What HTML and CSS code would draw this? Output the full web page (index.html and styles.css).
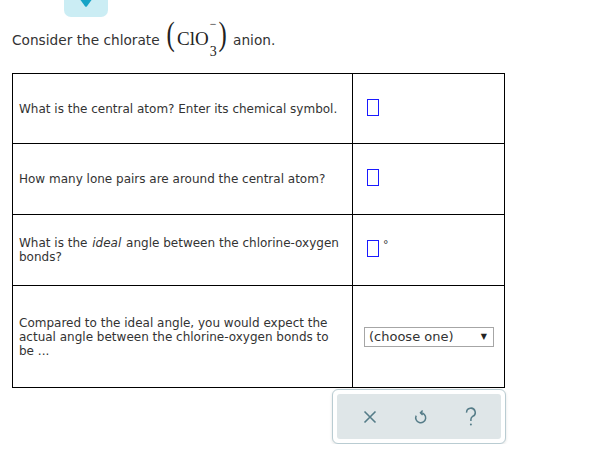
FILE: index.html
```html
<!DOCTYPE html>
<html>
<head>
<meta charset="utf-8">
<link rel="stylesheet" href="styles.css">
</head>
<body>
<div class="page">
  <div class="top-btn">
    <svg class="top-mark" width="14" height="8" viewBox="0 0 14 8"><path d="M0 -2 L14 -2 L8 6.2 Q7 7.4 6 6.2 Z" fill="#17a4c6"/></svg>
  </div>
  <p class="prompt">Consider the chlorate <span class="math"><span class="paren">(</span><span class="chem">ClO</span><span class="subsup"><span class="sup">−</span><span class="sub">3</span></span><span class="paren">)</span></span> anion.</p>

  <div class="grid">
    <div class="q"><span>What is the central atom? Enter its chemical symbol.</span></div>
    <div class="a"><span class="box"></span></div>
    <div class="q"><span>How many lone pairs are around the central atom?</span></div>
    <div class="a"><span class="box"></span></div>
    <div class="q"><span>What is the <i class="em">ideal</i> angle between the chlorine-oxygen bonds?</span></div>
    <div class="a"><span class="box"></span><span class="deg">°</span></div>
    <div class="q"><span>Compared to the ideal angle, you would expect the actual angle between the chlorine-oxygen bonds to be ...</span></div>
    <div class="a sel-cell"><div class="select"><span>(choose one)</span><span class="arrow">▼</span></div></div>
  </div>

  <div class="toolbar-row">
    <div class="toolbar">
      <div class="tools">
        <svg width="14" height="14" viewBox="0 0 14 14"><path d="M1.5 1.5 L12.5 12.5 M12.5 1.5 L1.5 12.5" stroke="#557c88" stroke-width="1.6" fill="none"/></svg>
        <svg width="14" height="17" viewBox="0 0 14 17"><path d="M6.5 4.8 A5 5 0 1 1 2.2 7.6" stroke="#557c88" stroke-width="1.5" fill="none"/><path d="M8.6 2.6 L6.5 4.8 L8.6 7" stroke="#557c88" stroke-width="1.5" fill="none"/></svg>
        <svg width="12" height="20" viewBox="0 0 12 20"><path d="M1.6 5.6 A4.3 4.3 0 1 1 7.6 9.4 C6.4 10.2 5.9 11 5.9 12.6 L5.9 14" stroke="#557c88" stroke-width="1.5" fill="none"/><circle cx="5.9" cy="17.4" r="1" fill="#557c88"/></svg>
      </div>
    </div>
  </div>
</div>
</body>
</html>
```

FILE: styles.css
```css
* { box-sizing: border-box; }
html, body { margin: 0; padding: 0; background: #fff; }
body { font-family: "DejaVu Sans", Verdana, sans-serif; color: #333; }
.page { padding-left: 12px; width: 591px; }

.top-btn {
  margin-left: 52px;
  width: 44px;
  height: 17px;
  background: #cbedf4;
  border-radius: 0 0 7px 7px;
  display: flex;
  justify-content: center;
  align-items: flex-start;
}
.top-mark { display: block; }

.prompt {
  margin: 0;
  height: 56px;
  padding-top: 0;
  font-size: 13.7px;
  line-height: 34px;
  display: flex;
  align-items: baseline;
  white-space: pre;
}
.math { font-family: "Liberation Serif", "Times New Roman", serif; color: #222; display: inline-flex; align-items: baseline; margin: 0 1px; }
.paren { font-size: 33px; font-weight: normal; line-height: 34px; display: inline-block; transform: scaleX(0.75); }
.chem { font-size: 19px; margin-left: 1px; }
.subsup {
  display: inline-flex;
  flex-direction: column;
  align-items: center;
  font-size: 14px;
  line-height: 13px;
  margin-left: 1px;
  position: relative;
  top: -17px;
}
.sup { font-size: 12px; }
.sub { margin-top: 14px; }

.grid {
  display: grid;
  grid-template-columns: 340px 152px;
  grid-template-rows: 70px 71px 71px 102px;
  width: 493px;
  border-left: 1px solid #000;
  border-top: 1px solid #000;
}
.grid > div {
  border-right: 1px solid #000;
  border-bottom: 1px solid #000;
  display: flex;
  align-items: center;
}
.q {
  font-size: 12px;
  line-height: 14px;
  padding: 0 6px;
  color: #333;
}
.em { padding: 0 1px; }
.a { padding-left: 14px; }
.box {
  display: inline-block;
  width: 12px;
  height: 17px;
  border: 1px solid #1a1aff;
  margin-top: -3px;
}
.deg { font-size: 11px; margin-left: 4px; margin-top: -12px; color: #333; }
.sel-cell { padding-left: 11px; }
.select {
  width: 130px;
  height: 20px;
  border: 1px solid #a6a6a6;
  display: flex;
  align-items: center;
  justify-content: space-between;
  padding: 0 6px 0 4px;
  font-size: 13px;
  color: #333;
}
.arrow { font-size: 8px; color: #222; }

.toolbar-row { display: flex; padding-left: 320px; padding-top: 1px; }
.toolbar {
  width: 174px;
  height: 55px;
  border: 1px solid #b9ccd2;
  border-radius: 6px;
  padding: 4px;
  background: #fff;
  box-shadow: 0 1px 3px rgba(0,0,0,0.12);
}
.tools {
  height: 45px;
  background: #dfe6e8;
  border-radius: 3px;
  display: flex;
  justify-content: space-around;
  align-items: center;
  padding: 0 6px 0 8px;
}
```
